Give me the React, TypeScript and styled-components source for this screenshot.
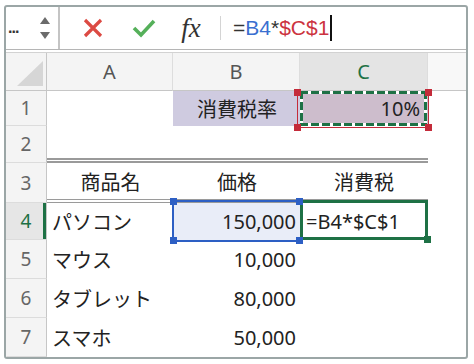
import React from 'react'
import styled, { createGlobalStyle } from 'styled-components'

const GREEN = '#1e7145'
const BLUE = '#2d5fc4'
const RED = '#c42b3a'

interface RowTypes {
  id: number
  cells: [string, string, string]
  double?: number
}

const rows: RowTypes[] = [
  { id: 1, cells: ['', '消費税率', '10%'] },
  { id: 2, cells: ['', '', ''], double: 5 },
  { id: 3, cells: ['商品名', '価格', '消費税'], double: 4 },
  { id: 4, cells: ['パソコン', '150,000', '=B4*$C$1'] },
  { id: 5, cells: ['マウス', '10,000', ''] },
  { id: 6, cells: ['タブレット', '80,000', ''] },
  { id: 7, cells: ['スマホ', '50,000', ''] },
]

const GlobalStyle = createGlobalStyle`
  body {
    margin: 0;
    background: #fff;
    font-family: 'Noto Sans', 'Noto Sans CJK JP', sans-serif;
  }
`

function App() {
  return (
    <>
      <GlobalStyle />
      <Frame>
        <FormulaBar>
          <NameBox>
            <Dots>...</Dots>
            <Spinner>
              <svg width="12" height="24" viewBox="0 0 12 24">
                <polygon points="6,1 11,8 1,8" fill="#6b6b6b" />
                <polygon points="1,16 11,16 6,23" fill="#6b6b6b" />
              </svg>
            </Spinner>
          </NameBox>
          <IconSlot $w={66}>
            <svg width="20" height="20" viewBox="0 0 20 20">
              <path d="M2 2 L18 18 M18 2 L2 18" stroke="#dc4a43" strokeWidth="3.2" />
            </svg>
          </IconSlot>
          <IconSlot $w={36}>
            <svg width="24" height="20" viewBox="0 0 24 20">
              <path d="M2 10 L9 17 L22 3" stroke="#55b05a" strokeWidth="3.6" fill="none" />
            </svg>
          </IconSlot>
          <IconSlot $w={58}>
            <Fx>fx</Fx>
          </IconSlot>
          <ThinDivider />
          <Formula>
            =<Ref $c="#3a6fd0">B4</Ref>*<Ref $c="#cc3340">$C$1</Ref>
            <Caret />
          </Formula>
        </FormulaBar>

        <Sheet>
          <Corner>
            <svg width="26" height="25" viewBox="0 0 26 25">
              <polygon points="0,25 26,25 26,0" fill="#d6d6d6" />
            </svg>
          </Corner>
          <ColHead>A</ColHead>
          <ColHead>B</ColHead>
          <ColHead $active>C</ColHead>
          <ColHead $filler />

          {rows.map((row) => (
            <React.Fragment key={row.id}>
              <RowHead $active={row.id === 4}>{row.id}</RowHead>
              <Cell $double={row.double} $align={row.id === 3 ? 'center' : 'left'}>
                {row.cells[0]}
              </Cell>
              <Cell
                $double={row.double}
                $align={row.id >= 4 ? 'right' : 'center'}
                $bg={row.id === 1 ? '#cfcbe0' : row.id === 4 ? '#e9edf8' : undefined}
              >
                {row.cells[1]}
                {row.id === 4 && (
                  <BlueRange>
                    <Handle $c={BLUE} style={{ left: -4, top: -4 }} />
                    <Handle $c={BLUE} style={{ left: -4, bottom: -4 }} />
                    <Handle $c={BLUE} style={{ right: -3, top: -4 }} />
                    <Handle $c={BLUE} style={{ right: -3, bottom: -4 }} />
                  </BlueRange>
                )}
              </Cell>
              <Cell
                $double={row.double}
                $align={row.id === 1 ? 'right' : row.id === 4 ? 'left' : 'center'}
                $bg={row.id === 1 ? '#cdbdcc' : undefined}
                $pad={row.id === 1 ? 8 : 6}
              >
                {row.cells[2]}
                {row.id === 1 && (
                  <RedCopy>
                    <Ants />
                    <Handle $c={RED} style={{ left: -4, top: -3 }} />
                    <Handle $c={RED} style={{ right: -4, top: -3 }} />
                    <Handle $c={RED} style={{ left: -4, bottom: -4 }} />
                    <Handle $c={RED} style={{ right: -4, bottom: -4 }} />
                  </RedCopy>
                )}
                {row.id === 4 && (
                  <GreenRange>
                    <Handle $c={GREEN} style={{ right: -6, bottom: -6 }} />
                  </GreenRange>
                )}
              </Cell>
              <Filler />
            </React.Fragment>
          ))}
        </Sheet>
      </Frame>
    </>
  )
}

const Frame = styled.div`
  margin: 5px 0 0 4px;
  width: 464px;
  height: 354px;
  box-sizing: border-box;
  border: 2px solid #9ba6a6;
  border-radius: 3px;
  overflow: hidden;
  display: flex;
  flex-direction: column;
  background: #fff;
`

const FormulaBar = styled.div`
  height: 43px;
  box-sizing: border-box;
  border-bottom: 1px solid #b5b5b5;
  display: flex;
  align-items: center;
  flex-shrink: 0;
`

const NameBox = styled.div`
  width: 54px;
  height: 100%;
  box-sizing: border-box;
  padding: 0 7px 0 2px;
  border-right: 2px solid #c4c4c4;
  display: flex;
  align-items: center;
  justify-content: space-between;
`

const Dots = styled.span`
  font-family: 'Liberation Sans', sans-serif;
  font-size: 16px;
  font-weight: bold;
  color: #333;
  letter-spacing: -1px;
`

const Spinner = styled.div`
  display: flex;
`

const IconSlot = styled.div<{ $w: number }>`
  width: ${(p) => p.$w}px;
  display: flex;
  justify-content: center;
  align-items: center;
`

const Fx = styled.span`
  font-family: 'Liberation Serif', serif;
  font-style: italic;
  font-size: 27px;
  color: #333;
  line-height: 1;
`

const ThinDivider = styled.div`
  width: 1px;
  height: 24px;
  background: #d4d4d4;
`

const Formula = styled.div`
  margin-left: 12px;
  display: flex;
  align-items: center;
  font-family: 'Liberation Sans', sans-serif;
  font-size: 21px;
  color: #333;
`

const Ref = styled.span<{ $c: string }>`
  color: ${(p) => p.$c};
`

const Caret = styled.span`
  width: 2px;
  height: 26px;
  margin-left: 1px;
  background: #111;
`

const Sheet = styled.div`
  margin-top: 2px;
  border-top: 1px solid #d2d2d2;
  display: grid;
  grid-template-columns: 41px 126px 127px 128px 1fr;
  grid-template-rows: 38px 35px 37px 40px 37px 39px 39px 39px;
  font-size: 20px;
  color: #222;
`

const Corner = styled.div`
  background: #f4f4f4;
  border-right: 1px solid #c6c6c6;
  border-bottom: 1px solid #c6c6c6;
  display: flex;
  align-items: flex-end;
  justify-content: flex-end;
  padding: 0 3px 4px 0;
`

const ColHead = styled.div<{ $active?: boolean; $filler?: boolean }>`
  background: ${(p) => (p.$active ? '#e4e4e4' : p.$filler ? '#f8f8f8' : '#f4f4f4')};
  color: ${(p) => (p.$active ? GREEN : '#555')};
  border-right: ${(p) => (p.$filler ? 'none' : '1px solid #dddddd')};
  border-bottom: 1px solid #c6c6c6;
  display: flex;
  align-items: center;
  justify-content: center;
`

const RowHead = styled.div<{ $active?: boolean }>`
  background: ${(p) => (p.$active ? '#e6e6e6' : '#f4f4f4')};
  color: ${(p) => (p.$active ? GREEN : '#666')};
  font-size: 19px;
  border-right: 1px solid #c6c6c6;
  border-bottom: 1px solid #dcdcdc;
  box-shadow: ${(p) => (p.$active ? `inset -3px 0 ${GREEN}` : 'none')};
  display: flex;
  align-items: center;
  justify-content: center;
`

const Cell = styled.div<{
  $align?: 'left' | 'center' | 'right'
  $bg?: string
  $double?: number
  $pad?: number
}>`
  position: relative;
  display: flex;
  align-items: center;
  justify-content: ${(p) =>
    p.$align === 'right' ? 'flex-end' : p.$align === 'center' ? 'center' : 'flex-start'};
  padding: 0 ${(p) => p.$pad ?? 4}px 0 ${(p) => p.$pad ?? 5}px;
  background: ${(p) => p.$bg ?? 'transparent'};
  border-bottom: ${(p) => (p.$double ? `${p.$double}px double #9a9a9a` : 'none')};
  white-space: nowrap;
`

const Filler = styled.div``

const Handle = styled.span<{ $c: string }>`
  position: absolute;
  width: 7px;
  height: 7px;
  background: ${(p) => p.$c};
`

const BlueRange = styled.div`
  position: absolute;
  top: -3px;
  left: -1px;
  right: 0;
  bottom: -2px;
  border: 2px solid ${BLUE};
  border-right: none;
  z-index: 3;
`

const GreenRange = styled.div`
  position: absolute;
  top: -3px;
  left: 0;
  right: 0;
  bottom: 0;
  border: 3px solid ${GREEN};
  z-index: 2;
`

const RedCopy = styled.div`
  position: absolute;
  top: 0;
  left: -3px;
  right: -1px;
  bottom: -2px;
  border: 1px solid ${RED};
  z-index: 2;
`

const Ants = styled.div`
  position: absolute;
  top: -1px;
  left: 2px;
  right: 1px;
  bottom: 1px;
  background:
    repeating-linear-gradient(90deg, ${GREEN} 0 8px, #fff 8px 11px) top / 100% 3px no-repeat,
    repeating-linear-gradient(90deg, ${GREEN} 0 8px, #fff 8px 11px) bottom / 100% 3px no-repeat,
    repeating-linear-gradient(180deg, ${GREEN} 0 8px, #fff 8px 11px) left / 3px 100% no-repeat,
    repeating-linear-gradient(180deg, ${GREEN} 0 8px, #fff 8px 11px) right / 3px 100% no-repeat;
`

export default App
